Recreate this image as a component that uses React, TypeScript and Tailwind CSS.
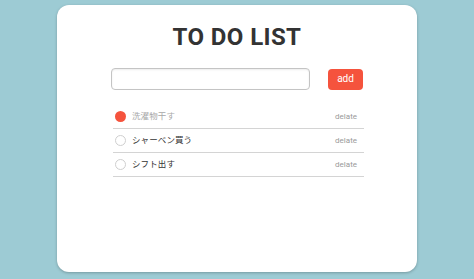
import React from "react";

const items = [
  { text: "洗濯物干す", done: true },
  { text: "シャーベン買う", done: false },
  { text: "シフト出す", done: false },
];

export default function App() {
  return (
    <div
      className="w-[474px] h-[279px] bg-[#9dcbd4] flex justify-center pt-[5px]"
      style={{ fontFamily: 'Roboto, "Noto Sans CJK JP", sans-serif' }}
    >
      <div className="w-[360px] h-[267px] bg-white rounded-[12px] shadow-[0_1px_3px_rgba(0,0,0,0.25)] flex flex-col items-center pt-[18px]">
        <h1 className="text-[24px] leading-[28px] font-bold text-[#333333] tracking-[0.4px]">TO DO LIST</h1>
        <div className="flex items-center gap-[18px] mt-[17px]">
          <input
            className="w-[199px] h-[22px] border border-[#c4c4c4] rounded-[4px] bg-white shadow-[inset_0_1px_2px_rgba(0,0,0,0.08)] outline-none px-2 text-[10px]"
            type="text"
          />
          <button className="w-[35px] h-[21px] rounded-[4px] bg-[#f5533d] text-white text-[10px] leading-none">
            add
          </button>
        </div>
        <ul className="w-[251px] mt-[15px] ml-[3px]">
          {items.map((it) => (
            <li
              key={it.text}
              className="h-[24px] border-b border-[#d4d4d4] flex items-center pl-[2px] pr-[7px]"
            >
              <span
                className={
                  it.done
                    ? "w-[11px] h-[11px] rounded-full bg-[#f5533d]"
                    : "w-[11px] h-[11px] rounded-full border border-[#cfcfcf] bg-white"
                }
              />
              <span
                className={
                  "ml-[6px] text-[8.5px] tracking-[0.1px] " +
                  (it.done ? "text-[#a8a8a8]" : "text-[#333333]")
                }
              >
                {it.text}
              </span>
              <span className="ml-auto text-[8px] text-[#9a9a9a]">delate</span>
            </li>
          ))}
        </ul>
      </div>
    </div>
  );
}
